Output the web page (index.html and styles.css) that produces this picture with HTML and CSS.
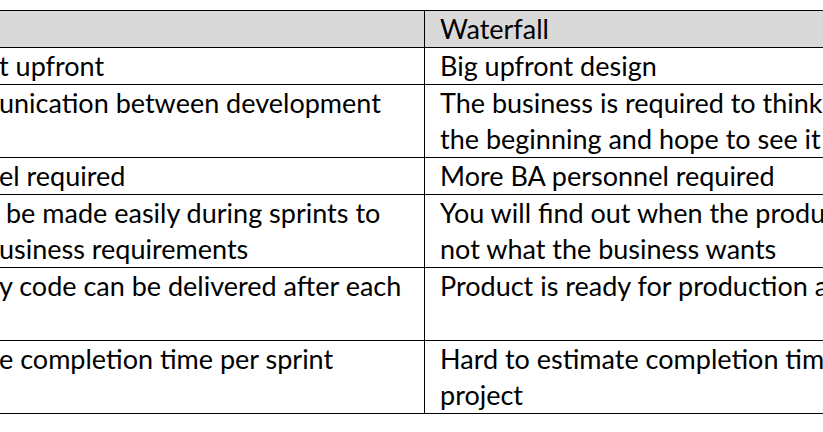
FILE: index.html
```html
<!DOCTYPE html>
<html lang="en">
<head>
<meta charset="utf-8">
<title>Agile vs Waterfall</title>
<link rel="stylesheet" href="styles.css">
</head>
<body>
<table class="compare">
  <colgroup>
    <col class="col-agile">
    <col class="col-waterfall">
  </colgroup>
  <thead>
    <tr class="head">
      <th></th>
      <th>Waterfall</th>
    </tr>
  </thead>
  <tbody>
    <tr>
      <td>t upfront</td>
      <td>Big upfront design</td>
    </tr>
    <tr>
      <td>unication between development<br>&nbsp;</td>
      <td>The business is required to think through everything at<br>the beginning and hope to see it in the end</td>
    </tr>
    <tr>
      <td>el required</td>
      <td>More BA personnel required</td>
    </tr>
    <tr>
      <td><span class="lead">be made easily during sprints to</span><br>usiness requirements</td>
      <td>You will find out when the product is delivered if it is<br>not what the business wants</td>
    </tr>
    <tr>
      <td>y code can be delivered after each<br>&nbsp;</td>
      <td>Product is ready for production at the end of the project</td>
    </tr>
    <tr>
      <td>e completion time per sprint<br>&nbsp;</td>
      <td>Hard to estimate completion time for the whole<br>project</td>
    </tr>
  </tbody>
</table>
</body>
</html>
```

FILE: styles.css
```css
html, body {
  margin: 0;
  padding: 0;
  overflow: hidden;
  background: #ffffff;
}

body {
  width: 823px;
  height: 432px;
  font-family: Lato, "Liberation Sans", sans-serif;
  color: #000000;
}

.compare {
  border-collapse: collapse;
  table-layout: fixed;
  width: 1040px;
  margin-top: 10px;
  margin-left: -16px;
  font-size: 27px;
  line-height: 36px;
}

.col-agile {
  width: 440px;
}

.col-waterfall {
  width: 600px;
}

.compare th,
.compare td {
  border: 1px solid #000000;
  padding: 0 0 0 14px;
  text-align: left;
  vertical-align: top;
  white-space: nowrap;
  overflow: hidden;
  font-weight: normal;
}

.compare td:last-child,
.compare th:last-child {
  padding-left: 15px;
}

.head th {
  background: #d9d9d9;
}

.lead {
  padding-left: 7px;
}
```
